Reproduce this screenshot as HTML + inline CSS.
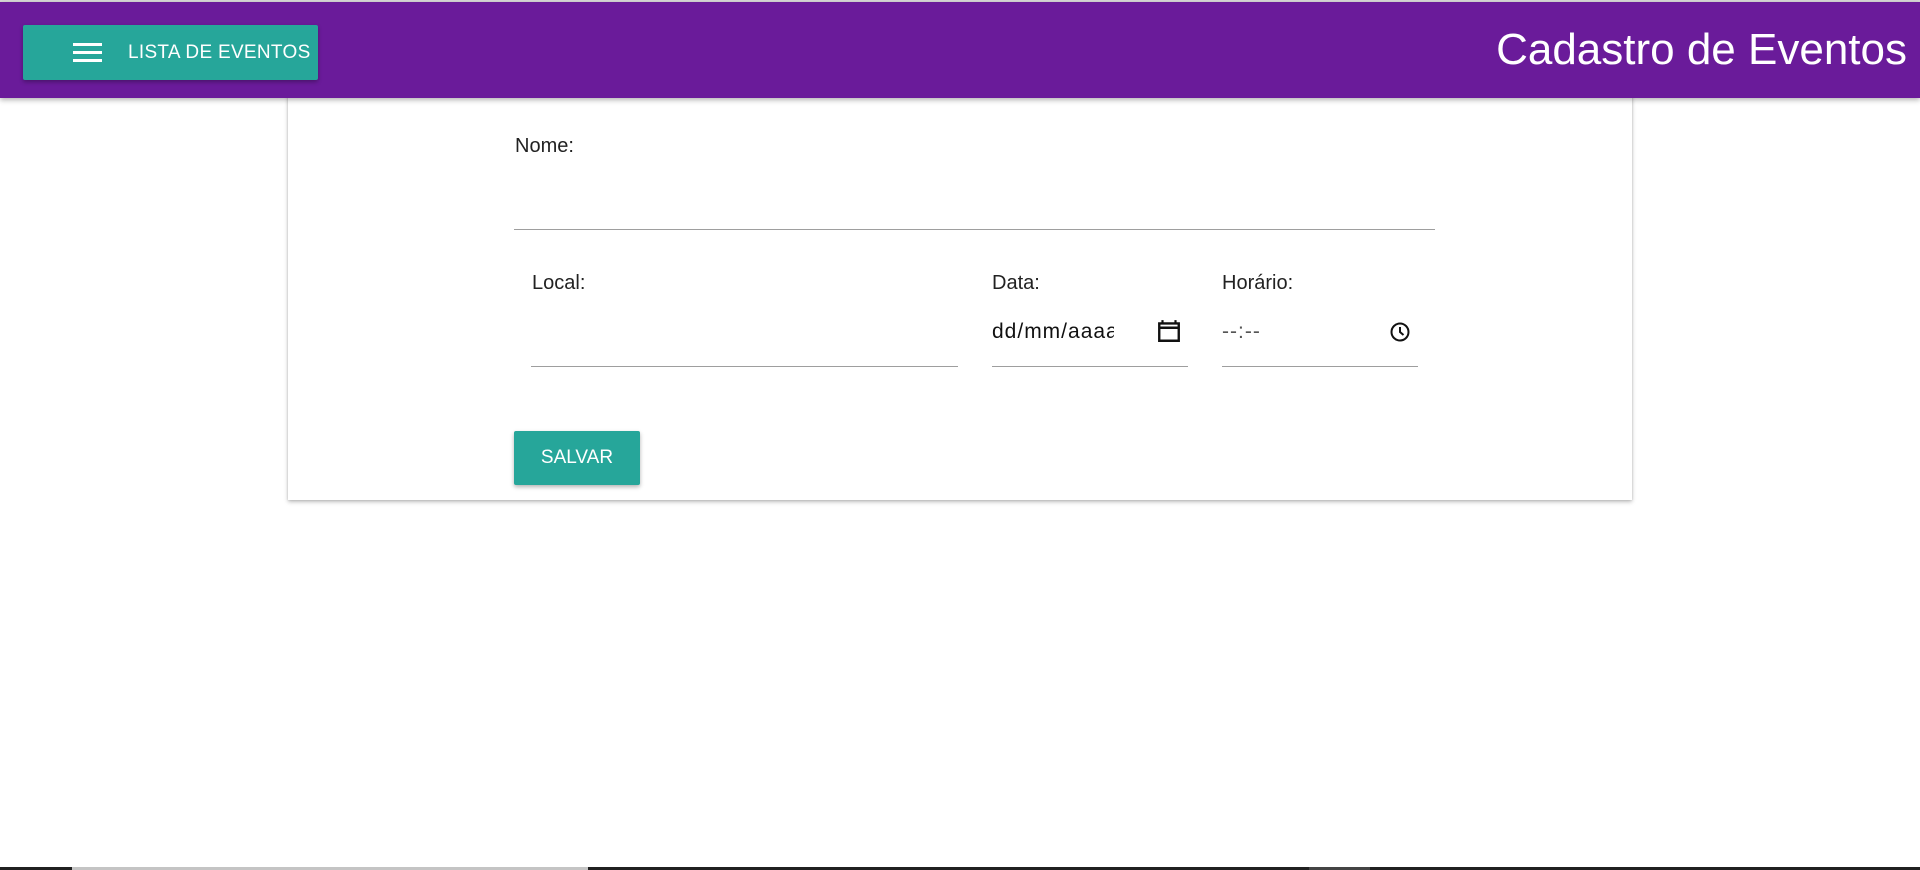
<!DOCTYPE html>
<html><head><meta charset="utf-8"><style>
*{margin:0;padding:0;box-sizing:border-box}
body{width:1920px;height:870px;background:#fff;position:relative;overflow:hidden;font-family:"Liberation Sans",sans-serif;color:#222}
.top{position:absolute;left:0;top:0;width:1920px;height:3px;background:#d8d8d8}
.hdr{position:absolute;left:0;top:2px;width:1920px;height:96px;background:#6a1b9a;box-shadow:0 2px 5px rgba(0,0,0,.3);z-index:2}
.btn1{position:absolute;left:23px;top:23px;width:295px;height:55px;background:#26a69a;border-radius:2px;box-shadow:0 2px 4px rgba(0,0,0,.3);color:#fff}
.btn1 .ham{position:absolute;left:50px;top:18px;width:29px}
.btn1 .ham i{display:block;height:3px;background:#fff;margin-bottom:5px}
.btn1 span{position:absolute;left:105px;top:17px;font-size:19px;letter-spacing:0.3px}
.title{position:absolute;right:13px;top:26px;font-size:44px;color:#fff;line-height:1}
.card{position:absolute;left:288px;top:90px;width:1344px;height:410px;background:#fff;box-shadow:0 2px 4px rgba(0,0,0,.25),0 0 2px rgba(0,0,0,.15)}
.lbl{position:absolute;font-size:20px;color:#222}
.line{position:absolute;height:1px;background:#9e9e9e}
.val{position:absolute;font-size:21px;color:#111;letter-spacing:1px}
.save{position:absolute;left:514px;top:431px;width:126px;height:54px;background:#26a69a;color:#fff;border-radius:2px;box-shadow:0 2px 4px rgba(0,0,0,.3);font-size:19px;text-align:center;line-height:54px;z-index:3}
.bar{position:absolute;left:0;top:867px;width:1920px;height:3px;background:#202020}
</style></head><body>
<div class="top"></div>
<div class="card"></div>
<div class="hdr">
 <div class="btn1"><div class="ham"><i></i><i></i><i></i></div><span>LISTA DE EVENTOS</span></div>
 <div class="title">Cadastro de Eventos</div>
</div>
<div class="lbl" style="left:515px;top:135px">Nome:</div>
<div class="line" style="left:514px;top:229px;width:921px"></div>
<div class="lbl" style="left:532px;top:272px">Local:</div>
<div class="line" style="left:531px;top:366px;width:427px"></div>
<div class="lbl" style="left:992px;top:272px">Data:</div>
<div class="val" style="left:992px;top:320px;width:122px;overflow:hidden;white-space:nowrap">dd/mm/aaaa</div>
<svg style="position:absolute;left:1156px;top:318px" width="26" height="26" viewBox="0 0 24 24"><path d="M3 5h18v16H3z M3 9h18" fill="none" stroke="#111" stroke-width="2.2"/><path d="M6 2v4M18 2v4" stroke="#111" stroke-width="2"/></svg>
<div class="line" style="left:992px;top:366px;width:196px"></div>
<div class="lbl" style="left:1222px;top:272px">Horário:</div>
<div class="val" style="left:1222px;top:320px;color:#555">--:--</div>
<svg style="position:absolute;left:1388px;top:320px" width="24" height="24" viewBox="0 0 24 24"><circle cx="12" cy="12" r="8.5" fill="none" stroke="#111" stroke-width="2"/><path d="M12 7v5l3.5 3" fill="none" stroke="#111" stroke-width="2"/></svg>
<div class="line" style="left:1222px;top:366px;width:196px"></div>
<div class="save">SALVAR</div>
<div class="bar"><div style="position:absolute;left:72px;width:516px;height:3px;background:#c4c4c4"></div><div style="position:absolute;left:1309px;width:61px;height:3px;background:#444"></div></div>
</body></html>
